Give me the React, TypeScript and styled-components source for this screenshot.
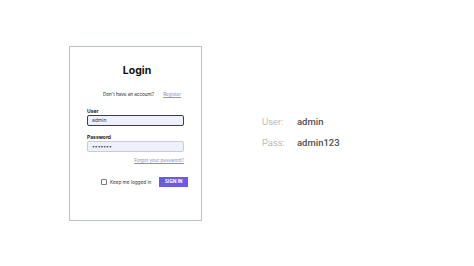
import React from "react";
import styled, {createGlobalStyle} from "styled-components";

const GlobalStyle = createGlobalStyle`
	html, body {
		margin: 0;
		padding: 0;
		background: #ffffff;
	}
	body {
		font-family: "Inter", "Noto Sans", sans-serif;
	}
	* {
		box-sizing: border-box;
	}
`;

const Page = styled.div`
	width: 474px;
	height: 266px;
	display: flex;
	align-items: center;
	gap: 60px;
	padding: 0 0 0 69px;
`;

const Card = styled.div`
	width: 133px;
	height: 175px;
	border: 1px solid #b9c3c7;
	display: flex;
	flex-direction: column;
	padding: 0 17px;
	color: #222;
	white-space: nowrap;
`;

const Title = styled.h1`
	margin: 16px 0 0;
	font-size: 10.5px;
	line-height: 16px;
	font-weight: 700;
	text-align: center;
	color: #111;
	padding-left: 3px;
`;

const RegisterRow = styled.div`
	margin-top: 12px;
	display: flex;
	align-items: center;
	padding: 0 3px 0 16px;
	font-size: 4.6px;
	line-height: 8px;
`;

const Link = styled.a`
	color: #8d90c6;
	text-decoration: underline;
	font-size: 4.6px;
	line-height: 8px;
`;

const RegisterLink = styled(Link)`
	margin-left: auto;
`;

const Field = styled.div<{top: number}>`
	margin-top: ${({top}) => top}px;
	display: flex;
	flex-direction: column;
	gap: 1px;
`;

const Label = styled.label`
	font-size: 5px;
	line-height: 6px;
	font-weight: 700;
	color: #222;
`;

const Input = styled.div<{focused?: boolean}>`
	height: 11px;
	display: flex;
	align-items: center;
	padding-left: 4px;
	font-size: 5px;
	color: #333;
	background: #eef0fc;
	border-radius: 2px;
	border: ${({focused}) => (focused ? "1.5px solid #3a3d42" : "1px solid #c6cbe0")};
`;

const Forgot = styled(Link)`
	margin-top: 5px;
	align-self: flex-end;
`;

const ActionRow = styled.div`
	margin-top: 12px;
	display: flex;
	align-items: center;
	padding-left: 14px;
	margin-right: -4px;
`;

const Check = styled.span`
	flex-shrink: 0;
	width: 6px;
	height: 6px;
	border: 1px solid #777;
	border-radius: 1px;
	background: #fff;
`;

const CheckText = styled.span`
	margin-left: 3px;
	font-size: 4.7px;
	color: #333;
`;

const Button = styled.button`
	flex-shrink: 0;
	margin-left: 8px;
	width: 29px;
	height: 10px;
	padding: 0;
	border: none;
	background: #6a5bdf;
	color: #fff;
	font-family: inherit;
	font-size: 4.5px;
	font-weight: 700;
	letter-spacing: 0.1px;
`;

const Info = styled.div`
	display: grid;
	grid-template-columns: 35px auto;
	row-gap: 8px;
	font-family: "Roboto", sans-serif;
	font-size: 9.5px;
	line-height: 13px;
	margin-top: -2px;
`;

const Key = styled.span`
	font-weight: 300;
	color: #a0a0a0;
`;

const Value = styled.span`
	font-weight: 500;
	color: #505050;
`;

export default function App() {
	return (
		<>
			<GlobalStyle />
			<Page>
				<Card>
					<Title>Login</Title>
					<RegisterRow>
						<span>Don't have an account?</span>
						<RegisterLink href="#">Register</RegisterLink>
					</RegisterRow>
					<Field top={9}>
						<Label>User</Label>
						<Input focused>admin</Input>
					</Field>
					<Field top={8}>
						<Label>Password</Label>
						<Input>•••••••</Input>
					</Field>
					<Forgot href="#">Forgot your password?</Forgot>
					<ActionRow>
						<Check />
						<CheckText>Keep me logged in</CheckText>
						<Button>SIGN IN</Button>
					</ActionRow>
				</Card>
				<Info>
					<Key>User:</Key>
					<Value>admin</Value>
					<Key>Pass:</Key>
					<Value>admin123</Value>
				</Info>
			</Page>
		</>
	);
}
